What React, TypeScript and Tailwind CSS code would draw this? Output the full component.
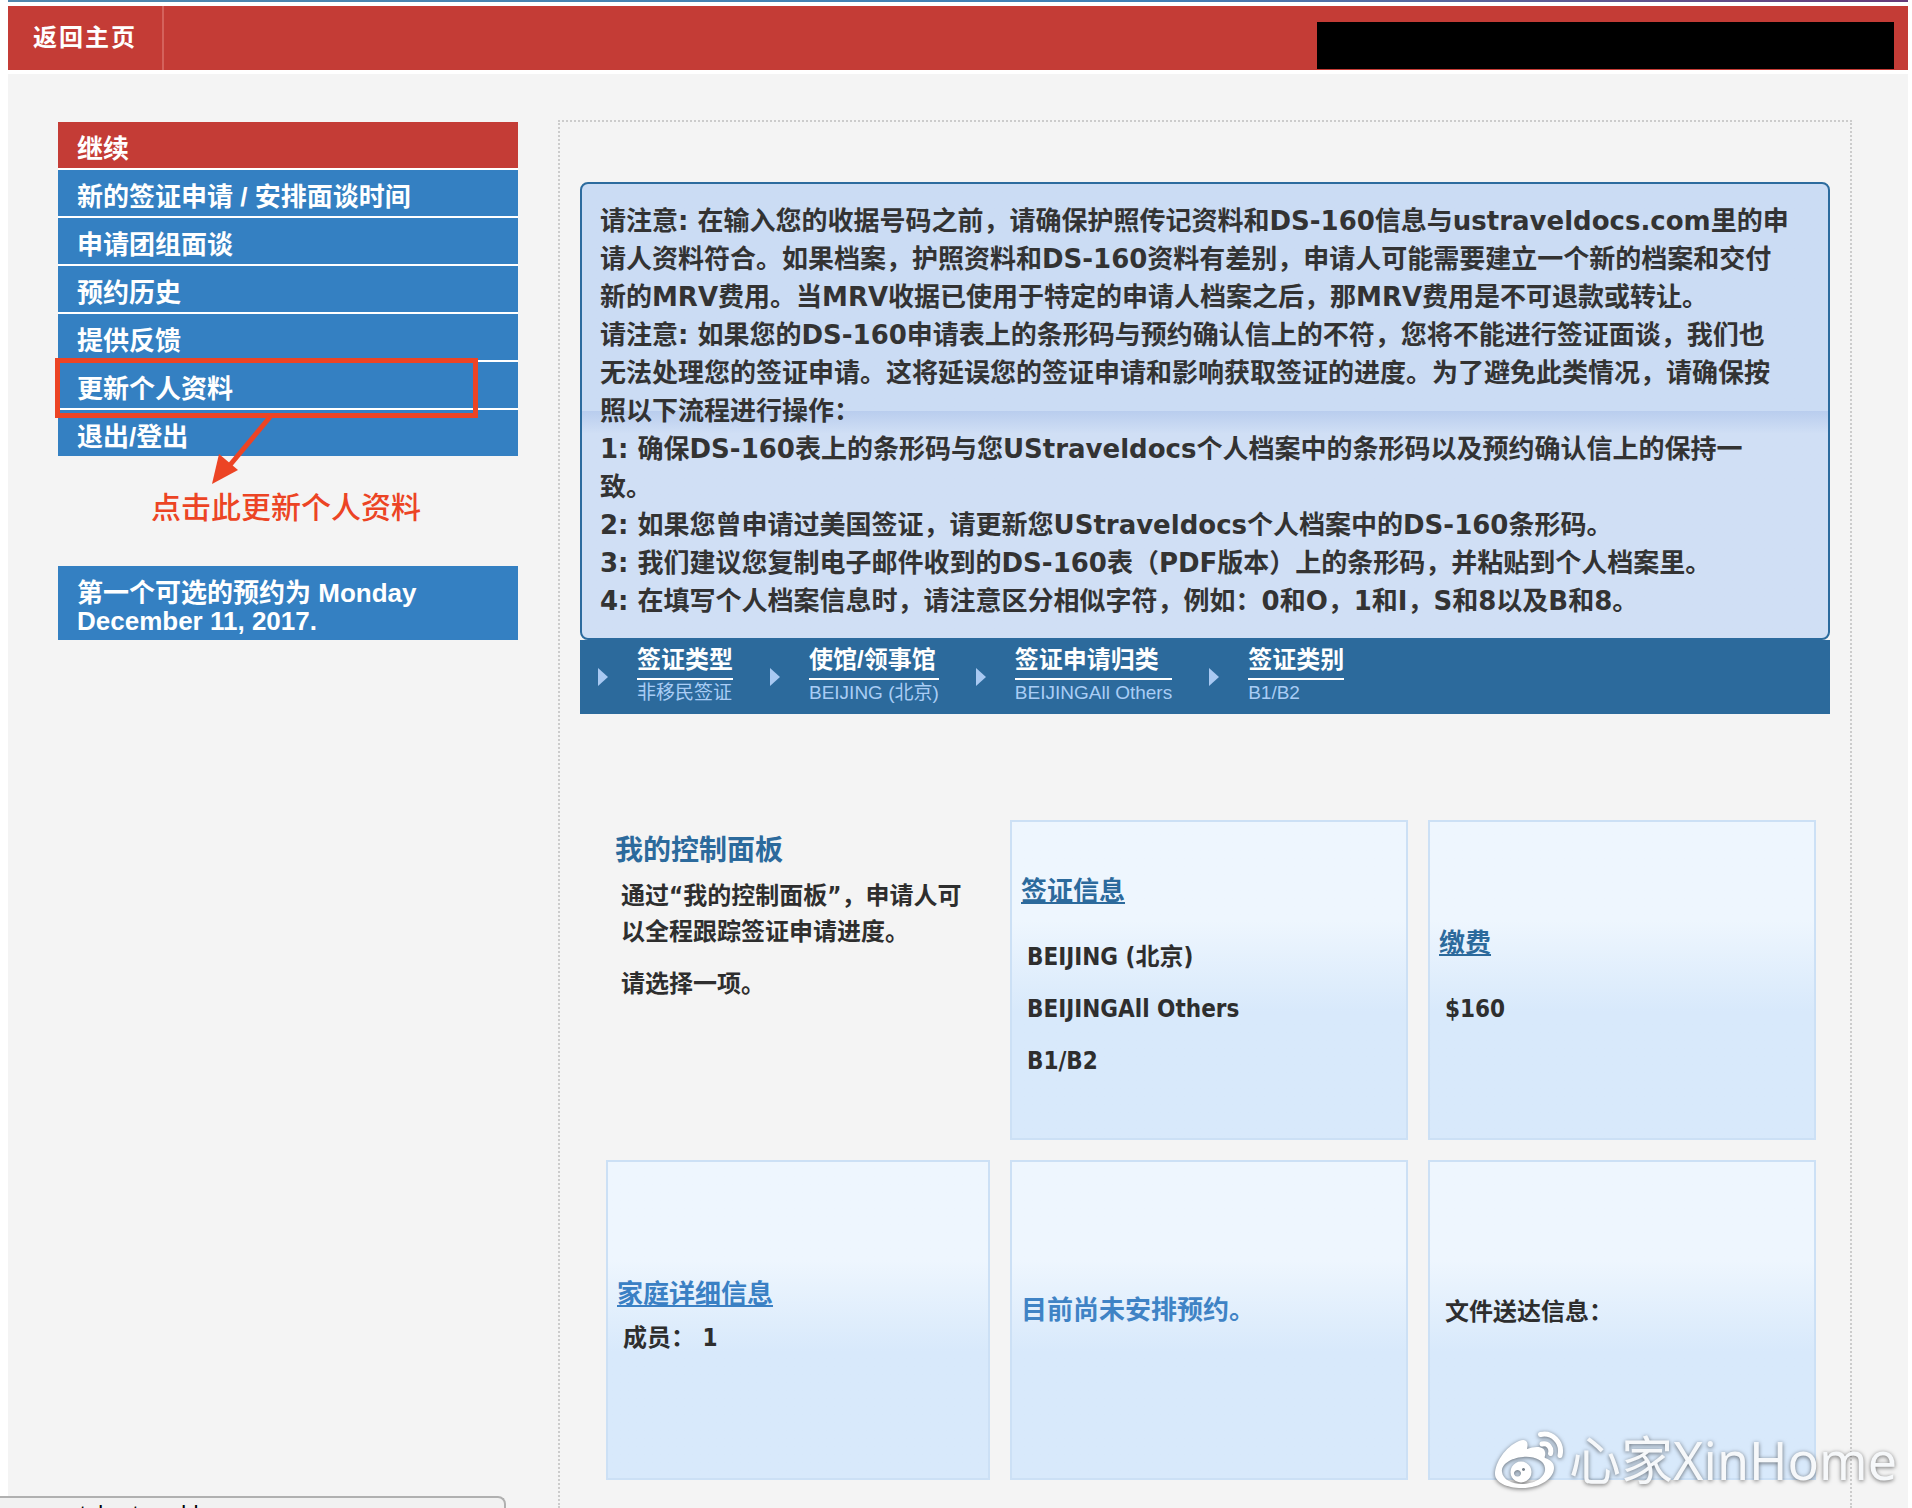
import { FC, ReactNode } from 'react'

interface MenuItem {
   label: string
   active?: boolean
   marked?: boolean
}

const menuItems: MenuItem[] = [
   { label: '继续', active: true },
   { label: '新的签证申请 / 安排面谈时间' },
   { label: '申请团组面谈' },
   { label: '预约历史' },
   { label: '提供反馈' },
   { label: '更新个人资料', marked: true },
   { label: '退出/登出' },
]

const notices = [
   '请注意: 在输入您的收据号码之前，请确保护照传记资料和DS-160信息与ustraveldocs.com里的申请人资料符合。如果档案，护照资料和DS-160资料有差别，申请人可能需要建立一个新的档案和交付\n新的MRV费用。当MRV收据已使用于特定的申请人档案之后，那MRV费用是不可退款或转让。',
   '请注意: 如果您的DS-160申请表上的条形码与预约确认信上的不符，您将不能进行签证面谈，我们也\n无法处理您的签证申请。这将延误您的签证申请和影响获取签证的进度。为了避免此类情况，请确保按\n照以下流程进行操作：',
   '1: 确保DS-160表上的条形码与您UStraveldocs个人档案中的条形码以及预约确认信上的保持一\n致。',
   '2: 如果您曾申请过美国签证，请更新您UStraveldocs个人档案中的DS-160条形码。',
   '3: 我们建议您复制电子邮件收到的DS-160表（PDF版本）上的条形码，并粘贴到个人档案里。',
   '4: 在填写个人档案信息时，请注意区分相似字符，例如：0和O，1和I，S和8以及B和8。',
]

const steps = [
   { title: '签证类型', value: '非移民签证' },
   { title: '使馆/领事馆', value: 'BEIJING (北京)' },
   { title: '签证申请归类', value: 'BEIJINGAll Others' },
   { title: '签证类别', value: 'B1/B2' },
]

const Header: FC = () => {
   return (
      <header>
         <div className="h-0.5 bg-linear-to-r from-[#4f86ad] via-[#3f7fb5] via-60% to-[#663a78]" />
         <nav className="mt-1 flex h-16 items-end justify-between bg-[#c43c36]">
            <a
               href="#home"
               className="flex h-16 items-center border-r-2 border-[#d4625c] pr-[25px] pl-[25px] text-[24px] font-bold tracking-[2px] text-white"
            >
               返回主页
            </a>
            <div className="mr-3.5 mb-px h-[47px] w-[577px] bg-black" />
         </nav>
      </header>
   )
}

const Sidebar: FC = () => {
   return (
      <aside className="mt-0.5 ml-[50px] w-[460px] shrink-0 text-[26px] font-bold text-white">
         <ul className="flex flex-col gap-0.5 bg-white">
            {menuItems.map(({ label, active, marked }) => (
               <li key={label} className="relative">
                  <a
                     href="#menu"
                     className={`flex h-[46px] items-center pt-2 pl-[19px] leading-[38px] ${active ? 'bg-[#c43c36]' : 'bg-[#3480c2]'}`}
                  >
                     {label}
                  </a>
                  {marked && (
                     <div className="absolute -top-1 -left-[3px] z-10 h-[60px] w-[423px] border-[5px] border-[#ec4424]">
                        <svg className="absolute top-[50px] left-[150px]" width="70" height="76" viewBox="0 0 70 76">
                           <path d="M60 4 L20 52" stroke="#ec4424" strokeWidth="5" />
                           <path d="M2 71 L9 41 L28 57 Z" fill="#ec4424" />
                        </svg>
                     </div>
                  )}
               </li>
            ))}
         </ul>
         <p className="mt-8 pl-[93px] text-[30px] leading-10 font-medium text-[#ec4424]">点击此更新个人资料</p>
         <p className="mt-[38px] bg-[#3480c2] pt-[13px] pr-10 pb-[5px] pl-[19px] leading-7">
            第一个可选的预约为 Monday December 11, 2017.
         </p>
      </aside>
   )
}

const NoticeBox: FC = () => {
   return (
      <section className="rounded-lg border-2 border-[#2c6b9e] bg-linear-to-b from-[#cbdcf4] from-0% via-[#cbdcf4] via-50% to-[#d0dff5] to-50%">
         <div className="bg-[linear-gradient(to_bottom,transparent_50%,#b9cdee_50%,#cfdff500_55%)] pt-[18px] pr-8 pb-[18px] pl-[18px] font-['DejaVu_Sans','Noto_Sans_CJK_SC',sans-serif] text-[26px] leading-[38px] font-bold whitespace-pre-line text-[#333333]">
            {notices.map((notice) => (
               <p key={notice}>{notice}</p>
            ))}
         </div>
      </section>
   )
}

const StepBar: FC = () => {
   return (
      <ol className="flex h-[74px] gap-[37px] bg-[#2c6a9c] pl-[18px]">
         {steps.map(({ title, value }) => (
            <li key={title} className="flex gap-[29px]">
               <svg className="mt-7" width="10" height="18" viewBox="0 0 10 18">
                  <path d="M0 0 L10 9 L0 18 Z" fill="#a9c9f2" />
               </svg>
               <div>
                  <p className="border-b-2 border-white pt-0.5 text-[24px] leading-9 font-bold text-white">{title}</p>
                  <p className="text-[19px] leading-[26px] text-[#a9cdf5]">{value}</p>
               </div>
            </li>
         ))}
      </ol>
   )
}

interface CardProps {
   children: ReactNode
   className?: string
}

const Card: FC<CardProps> = ({ children, className = 'pb-2' }) => {
   return (
      <div
         className={`flex h-80 flex-col items-start justify-center border-2 border-[#cce0f5] bg-linear-to-b from-[#eef6fe] from-31% to-[#d8e9fb] to-60% pl-[9px] ${className}`}
      >
         {children}
      </div>
   )
}

const Dashboard: FC = () => {
   return (
      <section className="mt-[106px] grid grid-cols-[384fr_398fr_388fr] gap-5 pr-3.5 pl-[26px] font-['DejaVu_Sans_Condensed','DejaVu_Sans','Noto_Sans_CJK_SC',sans-serif] text-[24px] leading-9 font-bold text-[#2e2e2e]">
         <div className="pt-[13px] pl-[9px]">
            <h2 className="text-[28px] text-[#2c6a9c]">我的控制面板</h2>
            <div className="mt-[9px] space-y-4 pr-6 pl-1.5">
               <p>通过“我的控制面板”，申请人可以全程跟踪签证申请进度。</p>
               <p>请选择一项。</p>
            </div>
         </div>
         <Card>
            <a href="#visa" className="mb-[30px] text-[26px] text-[#2c6a9c] underline">
               签证信息
            </a>
            <div className="space-y-4 pl-1.5">
               <p>BEIJING (北京)</p>
               <p>BEIJINGAll Others</p>
               <p>B1/B2</p>
            </div>
         </Card>
         <Card>
            <a href="#fee" className="mb-[30px] text-[26px] text-[#2c6a9c] underline">
               缴费
            </a>
            <p className="pl-1.5">$160</p>
         </Card>
         <Card>
            <a href="#family" className="mb-2 text-[26px] text-[#3a80c4] underline">
               家庭详细信息
            </a>
            <p className="pl-1.5">成员： 1</p>
         </Card>
         <Card className="pb-5">
            <p className="text-[26px] text-[#3f83c5]">目前尚未安排预约。</p>
         </Card>
         <Card className="pb-4">
            <p className="pl-1.5">文件送达信息：</p>
         </Card>
      </section>
   )
}

const Watermark: FC = () => {
   return (
      <div className="fixed right-[15px] bottom-[13px] flex items-center gap-1 font-['Noto_Sans','Noto_Sans_CJK_SC',sans-serif] text-[52px] leading-[70px] text-[#f6f8fa] drop-shadow-[0_1px_2px_#0000008c]">
         <svg width="72" height="60" viewBox="12 8 72 60">
            <path
               fill="#ffffff"
               fillRule="evenodd"
               d="M14 52 C14 41 24 25 38 19 C45 16 48 20 46 27 C54 24 63 24 64 30 C65 33 63 35 64 36 C70 38 73 41 73 46 C73 56 60 66 41 66 C25 66 14 60 14 52 Z M21 50 C22 58 32 62.500 43 62 C56 61 65 54 64 46 C63 38 53 34 42 35 C30 36 20 42 21 50 Z"
            />
            <path
               fill="#ffffff"
               fillRule="evenodd"
               d="M40 39.500 A10.500 10.500 0 1 0 40.010 39.500 Z M36.500 48 A3.500 3.300 0 1 1 36.490 48 Z M42.500 46 A1.500 1.500 0 1 1 42.490 46 Z"
            />
            <path
               d="M59.500 12.500 C71 10 82 20 79 33.500 M61 22 C67 20.500 71 26 69.500 31.500"
               fill="none"
               stroke="#ffffff"
               strokeWidth="5"
               strokeLinecap="round"
            />
         </svg>
         <span>心家XinHome</span>
      </div>
   )
}

// the bubble runs past the bottom of the window, only the top of the address shows
const StatusBubble: FC = () => {
   return (
      <div className="fixed bottom-0 left-0 h-3 w-[506px] overflow-hidden rounded-tr-lg border-2 border-b-0 border-l-0 border-[#b0b0b0] bg-[#f1f1f1] pt-0.5 pl-12 text-[22px] leading-7 text-black">
         portal.ustraveldocs.com
      </div>
   )
}

const App: FC = () => {
   return (
      <div className="flex min-h-screen flex-col bg-white pr-1 pl-2 font-['Liberation_Sans','Noto_Sans_CJK_SC',sans-serif]">
         <Header />
         <div className="mt-1 flex flex-1 bg-[#f4f4f4] pt-[46px] pr-14">
            <Sidebar />
            <main className="ml-10 flex-1 border-2 border-b-0 border-dotted border-[#cccccc] px-5 pt-[60px] pb-6">
               <NoticeBox />
               <StepBar />
               <Dashboard />
            </main>
         </div>
         <Watermark />
         <StatusBubble />
      </div>
   )
}

export default App
